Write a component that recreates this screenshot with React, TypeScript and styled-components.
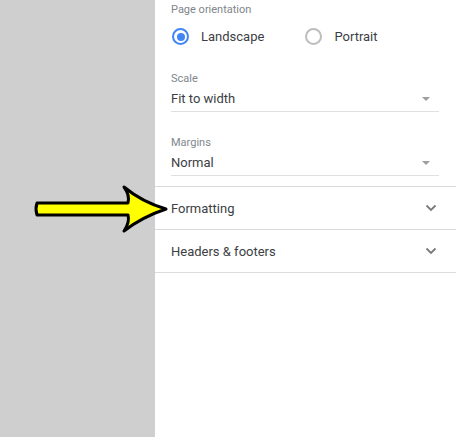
import React from "react";
import styled, { createGlobalStyle } from "styled-components";

const Global = createGlobalStyle`
  html, body { margin: 0; padding: 0; }
  body { font-family: Roboto, "Liberation Sans", Arial, sans-serif; background: #fff; }
`;

const Page = styled.div`
  position: relative;
  display: flex;
  width: 456px;
  height: 437px;
  overflow: hidden;
`;

const Gutter = styled.div`
  width: 155px;
  flex: none;
  background: #cfcfcf;
`;

const Panel = styled.div`
  flex: 1;
  display: flex;
  flex-direction: column;
  background: #fff;
`;

const Settings = styled.div`
  display: flex;
  flex-direction: column;
  padding: 3px 17px 10px 16px;
  border-bottom: 1px solid #dadce0;
`;

const Label = styled.div<{ $top?: number }>`
  font-size: 11px;
  line-height: 14px;
  color: #80868b;
  margin-top: ${(p) => p.$top ?? 0}px;
`;

const RadioRow = styled.div`
  display: flex;
  align-items: center;
  height: 39px;
  gap: 40px;
`;

const RadioOption = styled.label`
  display: flex;
  align-items: center;
  gap: 12px;
  font-size: 13px;
  color: #3c4043;
  padding-left: 1px;
`;

const RadioCircle = styled.span<{ $checked?: boolean }>`
  box-sizing: border-box;
  width: 17px;
  height: 17px;
  border-radius: 50%;
  border: 2px solid ${(p) => (p.$checked ? "#4285f4" : "#bdbdbd")};
  display: flex;
  align-items: center;
  justify-content: center;
  &::after {
    content: "";
    width: 8px;
    height: 8px;
    border-radius: 50%;
    background: ${(p) => (p.$checked ? "#4285f4" : "transparent")};
  }
`;

const Select = styled.div`
  display: flex;
  align-items: center;
  justify-content: space-between;
  height: 24px;
  box-sizing: border-box;
  padding-bottom: 2px;
  margin-top: 2px;
  border-bottom: 1px solid #e0e0e0;
  font-size: 13px;
  color: #3c4043;
`;

const Caret = styled.span`
  width: 0;
  height: 0;
  margin-right: 9px;
  border-left: 4px solid transparent;
  border-right: 4px solid transparent;
  border-top: 4px solid #9e9e9e;
`;

const Row = styled.div`
  display: flex;
  align-items: center;
  justify-content: space-between;
  height: 42px;
  padding: 0 18px 0 16px;
  border-bottom: 1px solid #dadce0;
  font-size: 13px;
  color: #3c4043;
`;

const Arrow = styled.svg`
  position: absolute;
  left: 0;
  top: 0;
  pointer-events: none;
`;

const Chevron = () => (
  <svg width="14" height="10" viewBox="0 0 14 10">
    <path d="M2.5 2.5 L7 7 L11.5 2.5" fill="none" stroke="#7a7a7a" strokeWidth="1.8" />
  </svg>
);

export default function App() {
  return (
    <Page>
      <Global />
      <Gutter />
      <Panel>
        <Settings>
          <Label>Page orientation</Label>
          <RadioRow>
            <RadioOption>
              <RadioCircle $checked />
              Landscape
            </RadioOption>
            <RadioOption>
              <RadioCircle />
              Portrait
            </RadioOption>
          </RadioRow>
          <Label $top={16}>Scale</Label>
          <Select>
            Fit to width
            <Caret />
          </Select>
          <Label $top={24}>Margins</Label>
          <Select>
            Normal
            <Caret />
          </Select>
        </Settings>
        <Row>
          Formatting
          <Chevron />
        </Row>
        <Row>
          Headers &amp; footers
          <Chevron />
        </Row>
      </Panel>
      <Arrow width="456" height="437" viewBox="0 0 456 437">
        <path
          d="M37 203 L128 203 Q130 195 124 187 Q142 202 166 209 Q142 217 124 231 Q130 222 128 215 L37 215 Q35 209 37 203 Z"
          fill="#ffff00"
          stroke="#000"
          strokeWidth="3"
          strokeLinejoin="round"
        />
      </Arrow>
    </Page>
  );
}
